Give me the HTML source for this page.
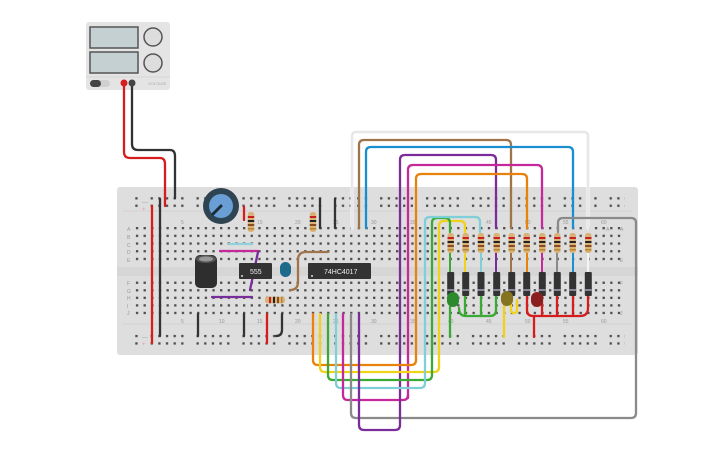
<!DOCTYPE html>
<html><head><meta charset="utf-8"><style>
html,body{margin:0;padding:0;background:#fff;width:725px;height:453px;overflow:hidden}
svg{display:block}
text{font-family:"Liberation Sans",sans-serif}
</style></head><body>
<svg width="725" height="453" viewBox="0 0 725 453" xmlns="http://www.w3.org/2000/svg">
<defs>
<pattern id="h" x="135.9" y="227" width="7.65" height="7.7" patternUnits="userSpaceOnUse"><rect x="0" y="0" width="2.3" height="2.3" fill="#4d4d4d"/></pattern>
<pattern id="h2" x="135.9" y="281.6" width="7.65" height="7.55" patternUnits="userSpaceOnUse"><rect x="0" y="0" width="2.3" height="2.3" fill="#4d4d4d"/></pattern>
<pattern id="r" x="150.6" y="197.2" width="45.9" height="7.4" patternUnits="userSpaceOnUse">
<rect x="0" width="2.3" height="2.3" fill="#4d4d4d"/><rect x="7.65" width="2.3" height="2.3" fill="#4d4d4d"/><rect x="15.3" width="2.3" height="2.3" fill="#4d4d4d"/><rect x="22.95" width="2.3" height="2.3" fill="#4d4d4d"/><rect x="30.6" width="2.3" height="2.3" fill="#4d4d4d"/></pattern>
<pattern id="r2" x="150.6" y="334.9" width="45.9" height="7.4" patternUnits="userSpaceOnUse">
<rect x="0" width="2.3" height="2.3" fill="#4d4d4d"/><rect x="7.65" width="2.3" height="2.3" fill="#4d4d4d"/><rect x="15.3" width="2.3" height="2.3" fill="#4d4d4d"/><rect x="22.95" width="2.3" height="2.3" fill="#4d4d4d"/><rect x="30.6" width="2.3" height="2.3" fill="#4d4d4d"/></pattern>
<g id="res"><rect x="-3.2" y="0" width="6.4" height="20" rx="2.5" fill="#d9b27a"/><rect x="-3.2" y="4" width="6.4" height="2" fill="#c8201e"/><rect x="-3.2" y="8" width="6.4" height="2" fill="#222"/><rect x="-3.2" y="12" width="6.4" height="2" fill="#8a4b1e"/><rect x="-3.2" y="16" width="6.4" height="1.5" fill="#b8862b"/></g>
<g id="dio"><rect x="-3.5" y="0" width="7" height="24" rx="1" fill="#333"/><rect x="-3.5" y="17" width="7" height="2" fill="#889"/></g>
</defs>

<!-- power supply -->
<rect x="86" y="22" width="84" height="68" rx="3" fill="#e4e4e4"/>
<rect x="90" y="27" width="48" height="21" fill="#c5d0d3" stroke="#555" stroke-width="1.5"/>
<rect x="90" y="52" width="48" height="21" fill="#c5d0d3" stroke="#555" stroke-width="1.5"/>
<circle cx="153" cy="37" r="9" fill="#ddd" stroke="#555" stroke-width="1.5"/>
<circle cx="153" cy="63" r="9" fill="#ddd" stroke="#555" stroke-width="1.5"/>
<line x1="86" y1="77" x2="170" y2="77" stroke="#d6d6d6"/>
<rect x="90" y="80" width="20" height="7" rx="3.5" fill="#d0d0d0"/><rect x="90" y="80" width="11" height="7" rx="3.5" fill="#444"/>
<text x="148" y="85" font-size="4" fill="#aaa">VOLTAGE</text>

<!-- breadboard -->
<rect x="117" y="187" width="521" height="168" rx="3" fill="#dedede"/>
<rect x="117" y="267" width="521" height="9" fill="#d6d6d6"/>
<line x1="123" y1="211" x2="632" y2="211" stroke="#d3d3d3"/>
<line x1="123" y1="324" x2="632" y2="324" stroke="#d3d3d3"/>
<rect x="135" y="196" width="490" height="12" fill="url(#r)"/>
<rect x="135" y="334" width="490" height="12" fill="url(#r2)"/>
<rect x="135" y="226" width="488" height="38" fill="url(#h)"/>
<rect x="135" y="281" width="488" height="38" fill="url(#h2)"/>
<g font-size="5" fill="#999">
<text x="127" y="231">A</text><text x="127" y="239">B</text><text x="127" y="247">C</text><text x="127" y="254">D</text><text x="127" y="262">E</text>
<text x="127" y="285">F</text><text x="127" y="293">G</text><text x="127" y="300">H</text><text x="127" y="308">I</text><text x="127" y="315">J</text>
<text x="181" y="224">5</text><text x="219" y="224">10</text><text x="257" y="224">15</text><text x="295" y="224">20</text><text x="333" y="224">25</text><text x="371" y="224">30</text><text x="410" y="224">35</text><text x="486" y="224">45</text><text x="525" y="224">50</text><text x="563" y="224">55</text><text x="601" y="224">60</text>
<text x="181" y="323">5</text><text x="219" y="323">10</text><text x="257" y="323">15</text><text x="295" y="323">20</text><text x="333" y="323">25</text><text x="371" y="323">30</text><text x="410" y="323">35</text><text x="448" y="323">40</text><text x="486" y="323">45</text><text x="525" y="323">50</text><text x="563" y="323">55</text><text x="601" y="323">60</text>
<text x="606" y="231">A</text><text x="620" y="231">A</text><text x="620" y="262">E</text><text x="620" y="285">F</text><text x="620" y="315">J</text>
</g>
<text x="142" y="204" font-size="6" fill="#9ab">—</text><text x="142" y="211" font-size="6" fill="#e99">+</text>
<text x="142" y="339" font-size="6" fill="#9ab">—</text><text x="142" y="346" font-size="6" fill="#e99">+</text>

<g fill="none" stroke-linecap="round" stroke-linejoin="round" stroke-width="2.3">
<!-- supply wires -->
<path d="M124 83 V152 Q124 158 130 158 H160 Q165 158 165 164 V206" stroke="#d61d1d"/>
<path d="M132 83 V144 Q132 150 138 150 H170 Q175 150 175 156 V198" stroke="#333"/>
<path d="M152 206 V343" stroke="#d61d1d"/>
<path d="M160 199 V336" stroke="#333"/>
<!-- small board wires -->
<path d="M198 314 V336" stroke="#333"/><path d="M244 314 V336" stroke="#333"/>
<path d="M267 314 V343" stroke="#d61d1d"/>
<path d="M282 314 V330 Q282 336 276 336" stroke="#333"/>
<path d="M244 207 V220" stroke="#d61d1d"/>
<path d="M320 199 V228" stroke="#333"/><path d="M335 199 V228" stroke="#333"/>
<path d="M229 244 H252" stroke="#8fd0dc"/>
<path d="M220 251 H258" stroke="#c4289a"/>
<path d="M212 297 H252" stroke="#7a2c9a"/>
<path d="M258 252 L250 290" stroke="#7a2c9a"/>
<path d="M290 290 Q298 290 298 282 V260 Q298 252 306 252 H328" stroke="#a0744a"/>
<!-- top loops -->
<path d="M352 228 V136 Q352 132 356 132 H584 Q588 132 588 136 V228" stroke="#f4f4f4" stroke-width="3.2"/>
<path d="M352 228 V136 Q352 132 356 132 H584 Q588 132 588 136 V228" stroke="#ddd" stroke-width="1" />
<path d="M359 228 V145 Q359 140 364 140 H506 Q511 140 511 145 V228" stroke="#a0744a"/>
<path d="M366 228 V152 Q366 147 371 147 H568 Q573 147 573 152 V228" stroke="#1a8fcf"/>
<path d="M400 400 V160 Q400 155 405 155 H491 Q496 155 496 160 V228" stroke="#7a2c9a"/>
<path d="M408 398 V170 Q408 165 413 165 H537 Q542 165 542 170 V228" stroke="#c4289a"/>
<path d="M416 360 V179 Q416 174 421 174 H522 Q527 174 527 179 V228" stroke="#e8820c"/>
<!-- bottom loops -->
<path d="M313 314 V360 Q313 365 318 365 H411 Q416 365 416 360" stroke="#e8820c"/>
<path d="M320 314 V367 Q320 372 325 372 H434 Q439 372 439 367 V226 Q439 221 444 221 H460 Q465 221 465 226 V232" stroke="#f0d21a"/>
<path d="M328 314 V375 Q328 380 333 380 H427 Q432 380 432 375 V223 Q432 218 437 218 H445 Q450 218 450 223 V232" stroke="#3aaa35"/>
<path d="M336 314 V383 Q336 388 341 388 H420 Q425 388 425 383 V222 Q425 217 430 217 H475 Q480 217 480 222 V232" stroke="#7fcfd8"/>
<path d="M343 314 V395 Q343 400 348 400 H403 Q408 400 408 395" stroke="#c4289a"/>
<path d="M351 314 V413 Q351 418 356 418 H631 Q636 418 636 413 V223 Q636 218 631 218 H563 Q558 218 558 223 V232" stroke="#8a8a8a"/>
<path d="M359 314 V425 Q359 430 364 430 H395 Q400 430 400 425 V400" stroke="#7a2c9a"/>
<!-- LED wiring -->
<path d="M450 307 V337" stroke="#3aaa35"/>
<path d="M459 308 Q459 316 466 316 H490 Q496 316 496 310 V295" stroke="#3aaa35"/>
<path d="M465 296 V316" stroke="#3aaa35"/><path d="M481 296 V316" stroke="#3aaa35"/>
<path d="M504 306 V337" stroke="#f0d21a"/>
<path d="M511 296 V310 Q511 313 514 313 Q517 313 517 310 V300" stroke="#f0d21a"/>
<path d="M527 296 V310 Q527 316 533 316 H580 Q588 316 588 308 V296" stroke="#d61d1d"/>
<path d="M534 316 V337" stroke="#d61d1d"/>
<path d="M542 296 V316 M557 296 V316 M573 296 V316" stroke="#d61d1d"/>
</g>
<!-- short lead wires resistor to diode -->
<g stroke-width="2" stroke-linecap="round">
<path d="M450 253 V272" stroke="#3aaa35"/><path d="M465 253 V272" stroke="#f0d21a"/><path d="M481 253 V272" stroke="#7fcfd8"/><path d="M496 253 V272" stroke="#7a2c9a"/><path d="M511 253 V272" stroke="#a0744a"/><path d="M527 253 V272" stroke="#e8820c"/><path d="M542 253 V272" stroke="#c4289a"/><path d="M557 253 V272" stroke="#8a8a8a"/><path d="M573 253 V272" stroke="#1a8fcf"/><path d="M588 253 V272" stroke="#f4f4f4"/>
</g>
<use href="#res" x="450.7" y="233"/><use href="#res" x="465.7" y="233"/><use href="#res" x="481" y="233"/><use href="#res" x="496.7" y="233"/><use href="#res" x="511.7" y="233"/><use href="#res" x="526.7" y="233"/><use href="#res" x="542.3" y="233"/><use href="#res" x="557.3" y="233"/><use href="#res" x="572.7" y="233"/><use href="#res" x="588.3" y="233"/>
<use href="#dio" x="450.7" y="272"/><use href="#dio" x="465.7" y="272"/><use href="#dio" x="481" y="272"/><use href="#dio" x="496.7" y="272"/><use href="#dio" x="511.7" y="272"/><use href="#dio" x="526.7" y="272"/><use href="#dio" x="542.3" y="272"/><use href="#dio" x="557.3" y="272"/><use href="#dio" x="572.7" y="272"/><use href="#dio" x="588.3" y="272"/>
<rect x="447" y="292" width="12" height="15" rx="6" fill="#2b8a2b"/>
<rect x="501" y="291" width="12" height="15" rx="6" fill="#857320"/>
<rect x="531" y="292" width="12" height="15" rx="6" fill="#8b1f1f"/>

<!-- left components -->
<use href="#res" x="251" y="212"/><use href="#res" x="313" y="212"/>
<g transform="translate(265 300) rotate(-90)"><use href="#res" x="0" y="0"/></g>
<circle cx="221" cy="206" r="18" fill="#2e4452"/>
<circle cx="221" cy="206" r="12" fill="#6a9fd6"/>
<line x1="221" y1="206" x2="213" y2="214" stroke="#1c2c36" stroke-width="3" stroke-linecap="round"/>
<rect x="195" y="255" width="22" height="33" rx="5" fill="#2e2e2e"/>
<ellipse cx="206" cy="259" rx="10" ry="4" fill="#555"/><ellipse cx="206" cy="259" rx="7" ry="2.5" fill="#999"/>
<rect x="239" y="263" width="33" height="16" rx="1" fill="#333"/>
<text x="250" y="274" font-size="7" fill="#eee">555</text>
<circle cx="242" cy="276" r="1" fill="#ddd"/>
<rect x="280" y="262" width="11" height="15" rx="5.5" fill="#1e6a8a"/>
<rect x="308" y="263" width="63" height="16" rx="1" fill="#333"/>
<text x="324" y="274" font-size="7" fill="#eee">74HC4017</text>
<circle cx="312" cy="276" r="1" fill="#ddd"/>
<circle cx="124" cy="83" r="3.5" fill="#d61d1d"/><circle cx="132" cy="83" r="3.5" fill="#444"/>
</svg>
</body></html>
